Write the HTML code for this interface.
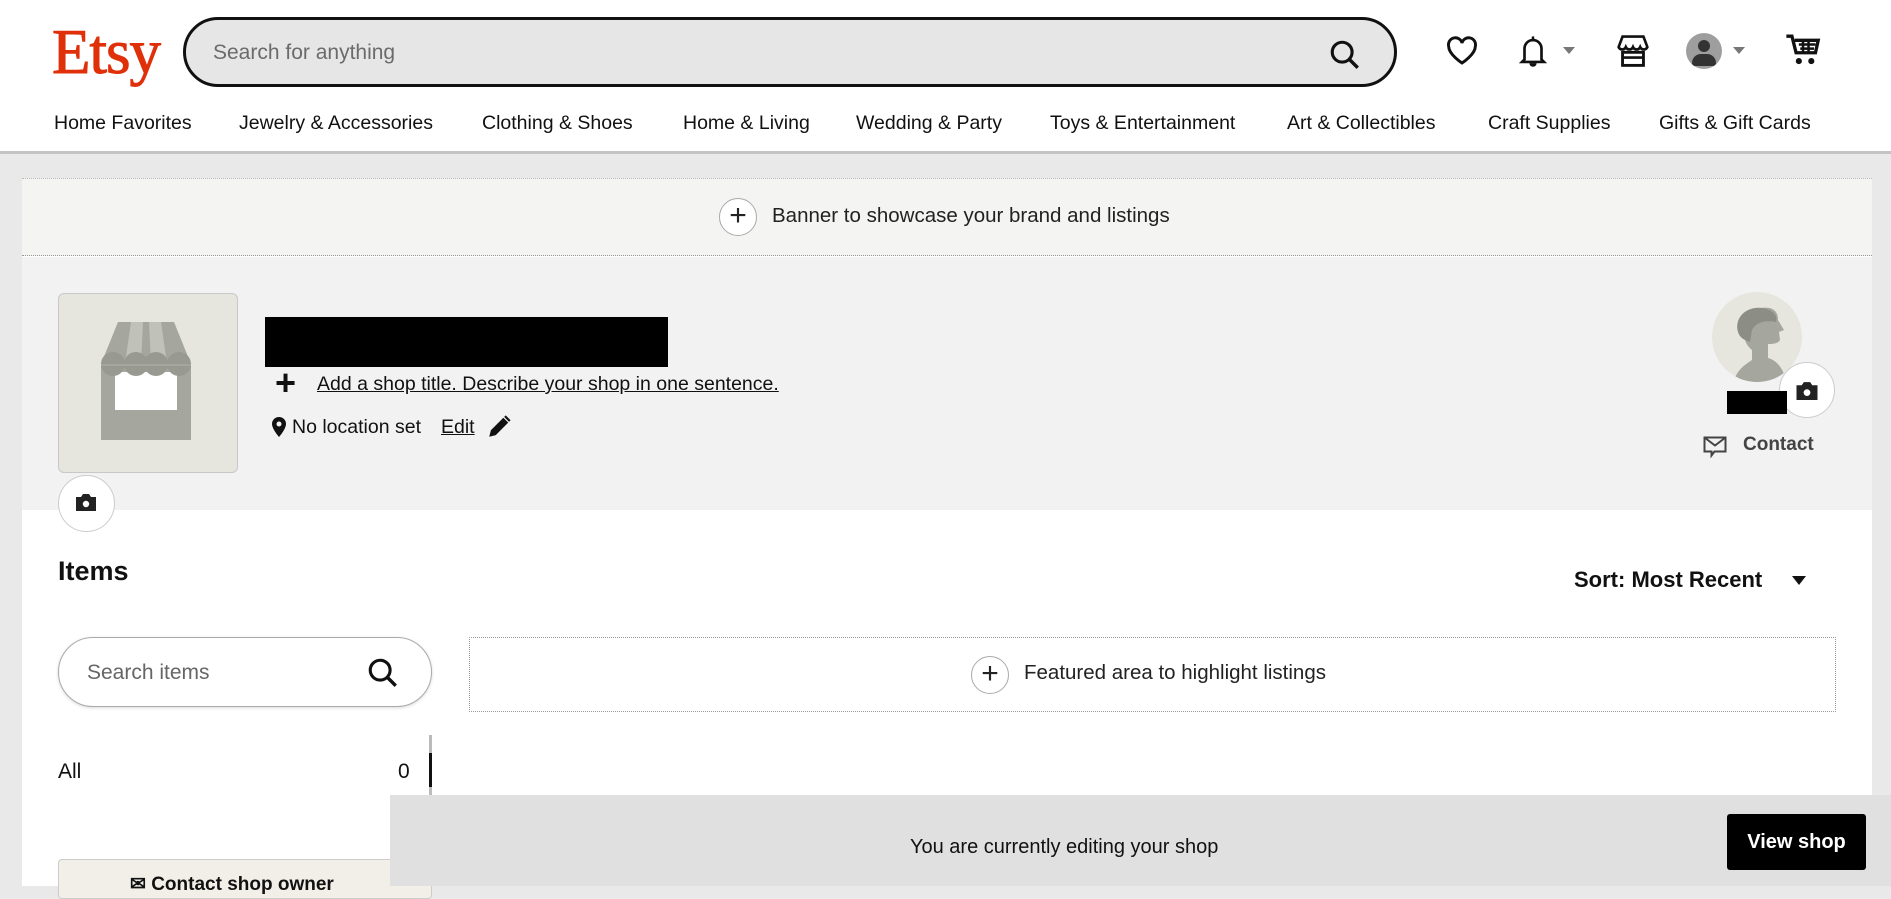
<!DOCTYPE html>
<html><head><meta charset="utf-8"><style>
*{box-sizing:border-box;margin:0;padding:0}
body{width:1891px;height:886px;overflow:hidden;background:#e9e9e9;font-family:"Liberation Sans",sans-serif;color:#222;position:relative}
.a{position:absolute}
#hdr{left:0;top:0;width:1891px;height:154px;background:#fff;border-bottom:3px solid #c4c4c4}
.nav{top:112px;font-size:19.5px;color:#111;white-space:nowrap}
.panel{left:22px;top:178px;width:1850px;height:708px;background:#fff}
</style></head><body>
<div id="hdr" class="a">
 <div class="a" style="left:52px;top:16px;font-family:'Liberation Serif',serif;font-size:63px;color:#e0300a;letter-spacing:-1px;-webkit-text-stroke:1px #e0300a">Etsy</div>
 <div class="a" style="left:183px;top:17px;width:1214px;height:70px;border:3px solid #111;border-radius:36px;background:#e6e6e6"></div>
 <div class="a" style="left:213px;top:41px;font-size:21px;color:#6b6b6b">Search for anything</div>
 <svg class="a" style="left:1328px;top:38px" width="34" height="34" viewBox="0 0 24 24"><circle cx="10" cy="10" r="7" fill="none" stroke="#111" stroke-width="2.2"/><path d="M15 15l6 6" stroke="#111" stroke-width="2.4"/></svg>
 <svg class="a" style="left:1446px;top:36px" width="32" height="30" viewBox="0 0 24 22"><path d="M12 20S2 13.5 2 7.5A5 5 0 0 1 12 5a5 5 0 0 1 10 2.5C22 13.5 12 20 12 20z" fill="none" stroke="#111" stroke-width="2.2"/></svg>
 <svg class="a" style="left:1518px;top:34px" width="30" height="34" viewBox="0 0 24 28"><path d="M5 21V12a7 7 0 0 1 14 0v9l2 2H3z" fill="none" stroke="#111" stroke-width="2.2"/><path d="M9 24a3 3 0 0 0 6 0z" fill="#111"/><rect x="11" y="2" width="2" height="4" fill="#111"/></svg>
 <div class="a" style="left:1563px;top:47px;border:6px solid transparent;border-top:7px solid #777"></div>
 <svg class="a" style="left:1617px;top:34px" width="32" height="34" viewBox="0 0 24 26"><path d="M4 2h16l3 8a3 3 0 0 1-5.5 0 3 3 0 0 1-5.5 0 3 3 0 0 1-5.5 0A3 3 0 0 1 1 10z" fill="none" stroke="#111" stroke-width="2"/><rect x="4" y="14" width="16" height="10" fill="none" stroke="#111" stroke-width="2.2"/><path d="M4 18h16" stroke="#111" stroke-width="2"/></svg>
 <div class="a" style="left:1686px;top:33px;width:36px;height:36px;border-radius:50%;background:#9e9e9e;overflow:hidden"><div class="a" style="left:12px;top:7px;width:12px;height:12px;border-radius:50%;background:#333"></div><div class="a" style="left:6px;top:21px;width:24px;height:12px;border-radius:12px 12px 4px 4px;background:#333"></div></div>
 <div class="a" style="left:1733px;top:47px;border:6px solid transparent;border-top:7px solid #777"></div>
 <svg class="a" style="left:1785px;top:33px" width="36" height="34" viewBox="0 0 26 24"><path d="M1 2h4l3 12h14l2-9H7" fill="none" stroke="#111" stroke-width="2.4"/><path d="M10 8h12M11 11h10M13 5v9M17 5v9" stroke="#111" stroke-width="1.8"/><circle cx="10" cy="20" r="2.2" fill="#111"/><circle cx="19" cy="20" r="2.2" fill="#111"/></svg>
 <div class="a nav" style="left:54px">Home Favorites</div>
 <div class="a nav" style="left:239px">Jewelry &amp; Accessories</div>
 <div class="a nav" style="left:482px">Clothing &amp; Shoes</div>
 <div class="a nav" style="left:683px">Home &amp; Living</div>
 <div class="a nav" style="left:856px">Wedding &amp; Party</div>
 <div class="a nav" style="left:1050px">Toys &amp; Entertainment</div>
 <div class="a nav" style="left:1287px">Art &amp; Collectibles</div>
 <div class="a nav" style="left:1488px">Craft Supplies</div>
 <div class="a nav" style="left:1659px">Gifts &amp; Gift Cards</div>
</div>
<div class="a panel"></div>
<div class="a" style="left:22px;top:178px;width:1850px;height:78px;background:#f4f4f2;border-top:1px dotted #bbb;border-bottom:1px dotted #999"></div>
<div class="a" style="left:719px;top:198px;width:38px;height:38px;border-radius:50%;border:1px solid #aaa;background:#fff;font-size:30px;line-height:34px;text-align:center;color:#222">+</div>
<div class="a" style="left:772px;top:204px;font-size:20.5px;color:#222">Banner to showcase your brand and listings</div>
<div class="a" style="left:22px;top:257px;width:1850px;height:253px;background:#f2f2f2"></div>
<div class="a" style="left:58px;top:293px;width:180px;height:180px;background:#e6e6df;border:1px solid #c8c8c8;border-radius:6px"></div>
<svg class="a" style="left:98px;top:322px" width="96" height="118" viewBox="0 0 96 118"><rect x="3" y="42" width="90" height="76" fill="#a5a79f"/><rect x="17" y="50" width="62" height="38" fill="#fff"/><path d="M20 0h56l17 42H3z" fill="#a5a79f"/><path d="M33 0h12l-2 42H27zM51 0h12l6 42H53z" fill="#c0c2b9"/><circle cx="15" cy="42" r="12" fill="#989a92"/><circle cx="38" cy="42" r="12" fill="#989a92"/><circle cx="58" cy="42" r="12" fill="#989a92"/><circle cx="81" cy="42" r="12" fill="#989a92"/><rect x="3" y="42" width="90" height="2" fill="#a5a79f"/></svg>
<div class="a" style="left:58px;top:475px;width:57px;height:57px;border-radius:50%;background:#fff;border:1px solid #ccc"></div>
<svg class="a" style="left:74px;top:492px" width="24" height="20" viewBox="0 0 24 20"><path d="M2 5h5l2-3h6l2 3h5v14H2z" fill="#222"/><circle cx="12" cy="12" r="3.2" fill="#fff"/></svg>
<div class="a" style="left:265px;top:317px;width:403px;height:50px;background:#000"></div>
<div class="a" style="left:275px;top:365px;font-size:36px;font-weight:bold;color:#111;line-height:36px">+</div>
<div class="a" style="left:317px;top:373px;font-size:19.5px;color:#111;text-decoration:underline">Add a shop title. Describe your shop in one sentence.</div>
<svg class="a" style="left:272px;top:417px" width="14" height="20" viewBox="0 0 14 20"><path d="M7 0a7 7 0 0 1 7 7c0 5-7 13-7 13S0 12 0 7a7 7 0 0 1 7-7z" fill="#111"/><circle cx="7" cy="7" r="2.5" fill="#f2f2f2"/></svg>
<div class="a" style="left:292px;top:416px;font-size:19.5px;color:#111">No location set</div>
<div class="a" style="left:441px;top:416px;font-size:19.5px;color:#111;text-decoration:underline">Edit</div>
<svg class="a" style="left:486px;top:414px" width="26" height="26" viewBox="0 0 24 24"><path d="M3 21l1.5-6L16 3.5l4.5 4.5L9 19.5z" fill="#111"/><path d="M17.5 2l4.5 4.5" stroke="#111" stroke-width="2"/></svg>
<div class="a" style="left:1712px;top:292px;width:90px;height:90px;border-radius:50%;background:#e6e6df;overflow:hidden">
<svg width="90" height="90" viewBox="0 0 90 90"><path d="M22 90c2-12 12-18 18-22V58c-6-4-10-14-8-26 2-12 14-18 26-16 6 2 8 6 8 12l6 10-5 2 1 8c-2 4-8 4-12 4v14c8 2 16 10 18 24z" fill="#a5a79f"/><path d="M26 40c-4-14 8-26 24-24 12 2 16 8 14 14-10-2-20 0-24 8l-2 12c-6-2-10-4-12-10z" fill="#8c8e86"/></svg></div>
<div class="a" style="left:1779px;top:362px;width:56px;height:56px;border-radius:50%;background:#fff;border:1px solid #ccc"></div>
<svg class="a" style="left:1794px;top:380px" width="26" height="21" viewBox="0 0 24 20"><path d="M2 5h5l2-3h6l2 3h5v14H2z" fill="#222"/><circle cx="12" cy="12" r="3.2" fill="#fff"/></svg>
<div class="a" style="left:1727px;top:391px;width:60px;height:23px;background:#000"></div>
<svg class="a" style="left:1703px;top:436px" width="24" height="22" viewBox="0 0 24 22"><path d="M1.5 1.5h21v14h-11l-3 4v-4h-7z" fill="none" stroke="#444" stroke-width="2"/><path d="M1.5 1.5l10.5 8 10.5-8" fill="none" stroke="#444" stroke-width="2"/></svg>
<div class="a" style="left:1743px;top:434px;font-size:19px;font-weight:bold;color:#444">Contact</div>
<div class="a" style="left:58px;top:556px;font-size:27px;font-weight:bold;color:#111">Items</div>
<div class="a" style="left:1574px;top:567px;font-size:22px;font-weight:bold;color:#111">Sort: Most Recent</div>
<div class="a" style="left:1792px;top:576px;border:7px solid transparent;border-top:9px solid #111"></div>
<div class="a" style="left:58px;top:637px;width:374px;height:70px;border:1px solid #aaa;border-radius:35px;background:#fff;box-shadow:0 1px 3px rgba(0,0,0,.15)"></div>
<div class="a" style="left:87px;top:661px;font-size:21px;color:#666">Search items</div>
<svg class="a" style="left:366px;top:656px" width="34" height="34" viewBox="0 0 24 24"><circle cx="10" cy="10" r="7" fill="none" stroke="#111" stroke-width="2.2"/><path d="M15 15l6 6" stroke="#111" stroke-width="2.4"/></svg>
<div class="a" style="left:469px;top:637px;width:1367px;height:75px;border:1px dotted #999"></div>
<div class="a" style="left:971px;top:656px;width:38px;height:38px;border-radius:50%;border:1px solid #aaa;background:#fff;font-size:30px;line-height:34px;text-align:center;color:#222">+</div>
<div class="a" style="left:1024px;top:661px;font-size:20.5px;color:#222">Featured area to highlight listings</div>
<div class="a" style="left:58px;top:760px;font-size:21px;color:#111">All</div>
<div class="a" style="left:398px;top:760px;font-size:21px;color:#111">0</div>
<div class="a" style="left:429px;top:735px;width:3px;height:70px;background:#bbb"></div>
<div class="a" style="left:429px;top:753px;width:3px;height:34px;background:#111"></div>
<div class="a" style="left:58px;top:859px;width:374px;height:40px;background:#f2efe8;border:1px solid #ccc;border-radius:4px"></div>
<div class="a" style="left:130px;top:873px;font-size:19px;font-weight:bold;color:#111">✉ Contact shop owner</div>
<div class="a" style="left:390px;top:795px;width:1501px;height:91px;background:#e0e0e0"></div>
<div class="a" style="left:910px;top:836px;font-size:20px;color:#111">You are currently editing your shop</div>
<div class="a" style="left:1727px;top:814px;width:139px;height:56px;background:#000;border-radius:3px;color:#fff;font-size:20px;font-weight:bold;text-align:center;line-height:56px">View shop</div>
</body></html>
